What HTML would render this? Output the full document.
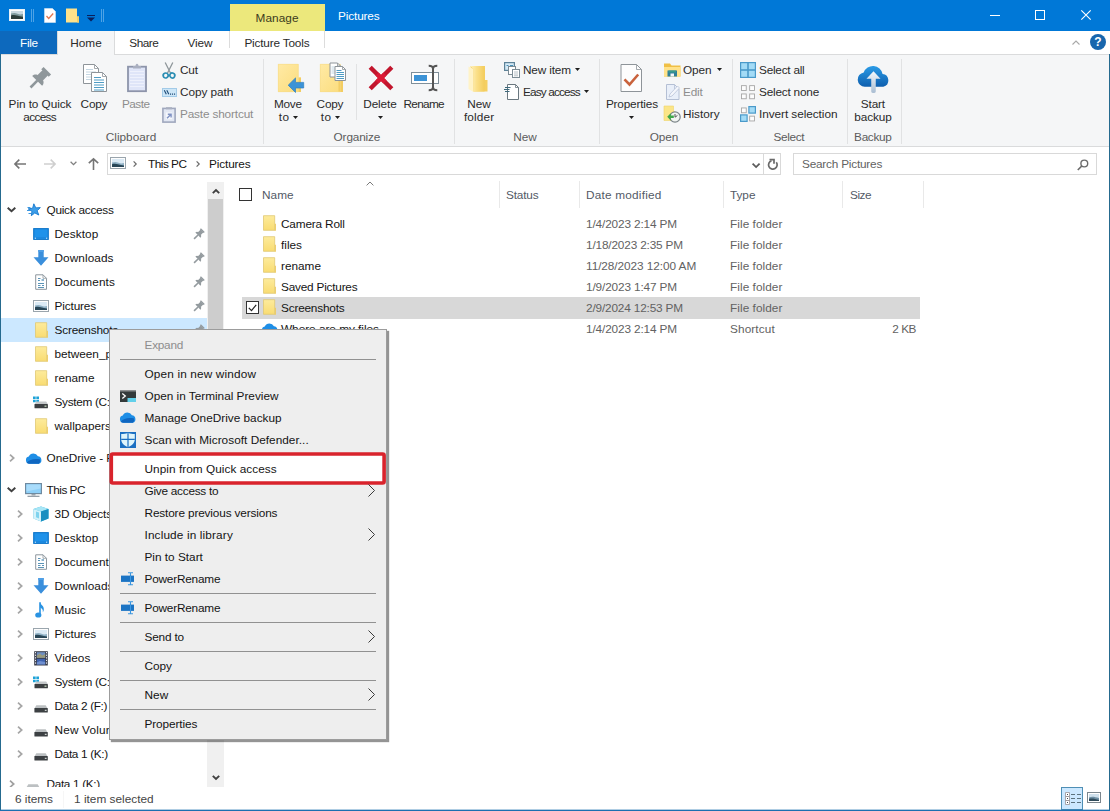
<!DOCTYPE html>
<html>
<head>
<meta charset="utf-8">
<title>Pictures</title>
<style>
*{box-sizing:border-box;margin:0;padding:0}
html,body{width:1110px;height:811px;overflow:hidden;background:#fff}
body{font-family:"Liberation Sans",sans-serif;font-size:11.8px;color:#141414;position:relative}
.a{position:absolute}
.t{position:absolute;white-space:nowrap;line-height:16px;height:16px}
.c{text-align:center}
.g{color:#8d8d8d}
.d{color:#5c5c5c}
.s{color:#444}
#tabs,#ribbon{color:#2a2a2a}
.h{color:#535a66}
.m{color:#626262}
svg{position:absolute;overflow:visible}
#win{position:absolute;left:0;top:0;width:1110px;height:811px;overflow:hidden}
</style>
</head>
<body>
<div id="win">
<svg width="0" height="0" style="left:0;top:0"><defs><linearGradient id="fg" x1="0" y1="0" x2="0" y2="1"><stop offset="0" stop-color="#fdeb9c"/><stop offset="1" stop-color="#f9dc72"/></linearGradient></defs></svg>
<div class="a" style="left:0px;top:0px;width:1110px;height:31px;background:#0078d7;"></div>
<div class="a" style="left:0px;top:31px;width:1110px;height:23px;background:#ffffff;"></div>
<div class="a" style="left:0px;top:54px;width:1110px;height:93px;background:#f5f6f7;border-top:1px solid #dadbdc;border-bottom:1px solid #dadbdc;"></div>
<div class="a" style="left:0px;top:147px;width:1110px;height:35px;background:#ffffff;"></div>
<div id="titlebar">
<svg style="left:9px;top:9px" width="16" height="12" viewBox="0 0 16 12"><rect x=".5" y=".5" width="15" height="11" fill="#fdfdfd" stroke="#e8f1f8"/><rect x="2" y="2" width="12" height="8" fill="#c9d8df"/><path d="M2 4.500c2.500-.8 4.500-.8 6.500.2s3.500.8 5.500.3V10H2z" fill="#7f9a9c"/><path d="M2 6.500c3-1 6-.2 9 .8l3 .5V10H2z" fill="#2c3d3a"/></svg>
<div class="a" style="left:31px;top:9px;width:1px;height:13px;background:#4ea3e6;"></div>
<div class="a" style="left:33px;top:9px;width:1px;height:13px;background:#4ea3e6;"></div>
<svg style="left:44px;top:8px" width="12" height="15" viewBox="0 0 12 15"><path d="M.5 .5h8l3 3v11h-11z" fill="#fff" stroke="#d8e6f2" stroke-width=".6"/><path d="M2.500 8l2.200 2.500 4.500-5" fill="none" stroke="#e27650" stroke-width="1.300"/></svg>
<svg style="left:66px;top:8px" width="13" height="15" viewBox="0 0 13 15"><path d="M0 .5h11v8h2v6H0z" fill="#ffe28a"/><path d="M11 8.500h2v6h-2z" fill="#f2cf6a"/></svg>
<svg style="left:87px;top:14.5px" width="8" height="7" viewBox="0 0 8 7"><path d="M0 .5h8" stroke="#0a1f5c" stroke-width="1"/><path d="M0 2.500h8L4 6.500z" fill="#0a1f5c"/></svg>
<div class="a" style="left:101px;top:9px;width:1px;height:13px;background:#4ea3e6;"></div>
<div class="a" style="left:103px;top:9px;width:1px;height:13px;background:#4ea3e6;"></div>
<div class="a" style="left:230px;top:4px;width:95px;height:27px;background:#ece87c;"></div>
<div class="t c" style="left:255.5px;top:10px;letter-spacing:0.08px;color:#3b3b20;">Manage</div>
<div class="t" style="left:338px;top:8px;letter-spacing:-0.13px;color:#fff;">Pictures</div>
<svg style="left:990px;top:15px" width="10" height="1" viewBox="0 0 10 1"><rect width="10" height="1" fill="#fff"/></svg>
<svg style="left:1035px;top:10px" width="10" height="10" viewBox="0 0 10 10"><rect x=".5" y=".5" width="9" height="9" fill="none" stroke="#fff"/></svg>
<svg style="left:1081px;top:10px" width="10" height="10" viewBox="0 0 10 10"><path d="M.3 .3l9.400 9.400M9.700 .3L.3 9.700" stroke="#fff" stroke-width="1.100"/></svg>
</div>
<div id="tabs">
<div class="a" style="left:0px;top:31px;width:57px;height:23px;background:#0d69bd;"></div>
<div class="t c" style="left:20.1px;top:35px;letter-spacing:-0.38px;color:#fff;">File</div>
<div class="a" style="left:57px;top:31px;width:58px;height:24px;background:#f5f6f7;border-left:1px solid #dadbdc;border-right:1px solid #dadbdc;"></div>
<div class="t c" style="left:70.3px;top:35px;letter-spacing:-0.02px;">Home</div>
<div class="t c" style="left:129.3px;top:35px;letter-spacing:-0.5px;">Share</div>
<div class="t c" style="left:187.6px;top:35px;letter-spacing:-0.18px;">View</div>
<div class="a" style="left:229px;top:31px;width:1px;height:17px;background:#dcdcdc;"></div>
<div class="a" style="left:324px;top:31px;width:1px;height:17px;background:#dcdcdc;"></div>
<div class="t c" style="left:244.4px;top:35px;letter-spacing:-0.18px;">Picture Tools</div>
<svg style="left:1072px;top:39.5px" width="8" height="5" viewBox="0 0 8 5"><path d="M.5 4.500L4 1l3.500 3.500" fill="none" stroke="#a8a8a8" stroke-width="1.100"/></svg>
<svg style="left:1090px;top:34px" width="16" height="16" viewBox="0 0 16 16"><circle cx="8" cy="8" r="8" fill="#1766ad"/><text x="8" y="12.300" font-family="Liberation Sans, sans-serif" font-size="12" font-weight="bold" fill="#fff" text-anchor="middle">?</text></svg>
</div>
<div id="ribbon">
<div class="a" style="left:263px;top:59px;width:1px;height:85px;background:#e1e2e3;"></div>
<div class="a" style="left:454px;top:59px;width:1px;height:85px;background:#e1e2e3;"></div>
<div class="a" style="left:599px;top:59px;width:1px;height:85px;background:#e1e2e3;"></div>
<div class="a" style="left:732px;top:59px;width:1px;height:85px;background:#e1e2e3;"></div>
<div class="a" style="left:847px;top:59px;width:1px;height:85px;background:#e1e2e3;"></div>
<div class="a" style="left:901px;top:59px;width:1px;height:85px;background:#e1e2e3;"></div>
<div class="a" style="left:356px;top:64px;width:1px;height:56px;background:#e1e2e3;"></div>
<div class="t c d" style="left:105.8px;top:129px;letter-spacing:-0.01px;">Clipboard</div>
<div class="t c d" style="left:333.6px;top:129px;letter-spacing:-0.16px;">Organize</div>
<div class="t c d" style="left:513.3px;top:129px;letter-spacing:-0.1px;">New</div>
<div class="t c d" style="left:649.7px;top:129px;letter-spacing:-0.11px;">Open</div>
<div class="t c d" style="left:773.5px;top:129px;letter-spacing:-0.36px;">Select</div>
<div class="t c d" style="left:854.1px;top:129px;letter-spacing:-0.33px;">Backup</div>
<svg style="left:29px;top:67px" width="22" height="22" viewBox="0 0 22 22"><g transform="translate(10 12) rotate(45)" fill="#8f979b"><path d="M-5.300 -11.800h10.600v3.300h-10.600z"/><path d="M-3.800 -9h7.600v7.500h-7.600z"/><path d="M-7 2.600c0-3 2.300-4.600 3.700-4.600h6.600c1.400 0 3.700 1.600 3.700 4.600z"/><path d="M-1.300 2.400h2.600v9.600h-2.600z"/></g></svg>
<div class="t c" style="left:8.6px;top:96px;letter-spacing:-0.07px;">Pin to Quick</div>
<div class="t c" style="left:23.3px;top:109px;letter-spacing:-0.65px;">access</div>
<svg style="left:83px;top:64px" width="24" height="28" viewBox="0 0 24 28"><path d="M0.5 0.5h11l4 4v15h-15z" fill="#fff" stroke="#8e9499" stroke-width="1"/><path d="M11.5 0.5v4h4" fill="none" stroke="#8e9499" stroke-width=".8"/><path d="M3 5.5H10" stroke="#c4d6e2" stroke-width="1"/><path d="M3 8H13" stroke="#c4d6e2" stroke-width="1"/><path d="M3 10.5H13" stroke="#c4d6e2" stroke-width="1"/><path d="M3 13H13" stroke="#c4d6e2" stroke-width="1"/><path d="M3 15.5H13" stroke="#c4d6e2" stroke-width="1"/><path d="M8.5 8.5h11l4 4v15h-15z" fill="#fff" stroke="#8e9499" stroke-width="1"/><path d="M19.5 8.5v4h4" fill="none" stroke="#8e9499" stroke-width=".8"/><path d="M11 13.5H18" stroke="#4f9cc4" stroke-width="1"/><path d="M11 16H21" stroke="#4f9cc4" stroke-width="1"/><path d="M11 18.5H21" stroke="#4f9cc4" stroke-width="1"/><path d="M11 21H21" stroke="#4f9cc4" stroke-width="1"/><path d="M11 23.5H21" stroke="#4f9cc4" stroke-width="1"/><path d="M11 26H21" stroke="#4f9cc4" stroke-width="1"/></svg>
<div class="t c" style="left:80.6px;top:96px;letter-spacing:-0.23px;">Copy</div>
<svg style="left:127px;top:63px" width="20" height="29" viewBox="0 0 20 29"><rect x="1" y="3.700" width="18" height="24.500" fill="#dfe5f8" stroke="#8d94aa" stroke-width="1.800"/><path d="M3 8.500h14M3 11.500h14M3 14.500h14M3 17.500h14M3 20.500h14M3 23.500h14" stroke="#eef1fc" stroke-width="1.200"/><path d="M6 5.500V3h2.500c0-1.300.5-2.300 1.500-2.300s1.500 1 1.500 2.300H14v2.500z" fill="#a9afc0"/></svg>
<div class="t c g" style="left:122.0px;top:96px;letter-spacing:-0.53px;">Paste</div>
<svg style="left:162px;top:62px" width="14" height="17" viewBox="0 0 14 17"><path d="M3.200 .5L8.700 11.500M10.800 .5L5.300 11.500" stroke="#8f979b" stroke-width="1.300"/><ellipse cx="3.700" cy="13.500" rx="2.500" ry="2.400" fill="none" stroke="#2a8db3" stroke-width="1.700" transform="rotate(-25 3.700 13.500)"/><ellipse cx="10.300" cy="13.500" rx="2.500" ry="2.400" fill="none" stroke="#2a8db3" stroke-width="1.700" transform="rotate(25 10.300 13.500)"/></svg>
<div class="t" style="left:180px;top:62px;letter-spacing:-0.18px;">Cut</div>
<svg style="left:161.5px;top:88px" width="15" height="9" viewBox="0 0 15 9"><rect x=".5" y=".5" width="14" height="8" fill="#cde6f7" stroke="#a3cbe8"/><path d="M2.300 2.300l2 4M4.800 2.300l2 4" stroke="#1d4b78" stroke-width="1.100"/><path d="M8 6.200h1.100M10 6.200h1.100M12 6.200h1.100" stroke="#1d4b78" stroke-width="1.300"/></svg>
<div class="t" style="left:180px;top:84px;letter-spacing:-0.06px;">Copy path</div>
<svg style="left:162px;top:105.5px" width="14" height="17" viewBox="0 0 14 17"><rect x=".9" y="2.400" width="12.200" height="13.700" fill="#e2e7f3" stroke="#a0a8be" stroke-width="1.600"/><path d="M4 3.300V1.200h6v2.100z" fill="#a9afc0"/><path d="M3.800 13.300V6.500h6.400v6.800z" fill="#f6f8fc"/><path d="M5 12.300l3.800-3.800M5.800 8.200h3.300v3.300" fill="none" stroke="#8193c4" stroke-width="1.400"/></svg>
<div class="t g" style="left:180px;top:106px;letter-spacing:-0.16px;">Paste shortcut</div>
<svg style="left:278px;top:64px" width="27" height="29" viewBox="0 0 27 29"><defs><linearGradient id="yg" x1="0" y1="0" x2="1" y2="1"><stop offset="0" stop-color="#ffeaa5"/><stop offset="1" stop-color="#fbdc7c"/></linearGradient></defs><path d="M0 0h20.500v13.500h2.500V28H0z" fill="url(#yg)"/><path d="M20.500 13.500H23V28h-2.500z" fill="#f3cd62"/><path d="M.3 .3h20v27.400H.3z" fill="none" stroke="#f7dc8a" stroke-width=".6"/><path d="M10.200 21.200l7.300-7.300v4.500h8.200v5.600h-8.200v4.500z" fill="#3c93d6" stroke="#2f7fc0" stroke-width=".7"/></svg>
<div class="t c" style="left:273.9px;top:96px;letter-spacing:-0.21px;">Move</div>
<div class="t c" style="left:278.8px;top:109px;letter-spacing:0.49px;">to</div>
<svg style="left:293.2px;top:115.5px" width="5" height="3" viewBox="0 0 5 3"><path d="M0 0h5L2.500 3z" fill="#1f1f1f"/></svg>
<svg style="left:320px;top:62px" width="27" height="30" viewBox="0 0 27 30"><path d="M0 2h20.500v13.500h2.500V30H0z" fill="url(#yg)"/><path d="M18.500 15.500H23V30h-4.500z" fill="#f3cd62"/><path d="M.3 2.300h20v27.400H.3z" fill="none" stroke="#f7dc8a" stroke-width=".6"/><path d="M10.0 1.0h7.5l3 3v11h-10.5z" fill="#fff" stroke="#8e9499" stroke-width="1"/><path d="M17.5 1.0v3h3" fill="none" stroke="#8e9499" stroke-width=".8"/><path d="M11.5 5.0H16.5" stroke="#c4d6e2" stroke-width="1"/><path d="M11.5 7.0H18.5" stroke="#c4d6e2" stroke-width="1"/><path d="M11.5 9.0H18.5" stroke="#c4d6e2" stroke-width="1"/><path d="M11.5 11.0H18.5" stroke="#c4d6e2" stroke-width="1"/><path d="M15.0 4.5h7.5l3 3v11h-10.5z" fill="#fff" stroke="#8e9499" stroke-width="1"/><path d="M22.5 4.5v3h3" fill="none" stroke="#8e9499" stroke-width=".8"/><path d="M16.5 8.5H21.5" stroke="#4f9cc4" stroke-width="1"/><path d="M16.5 10.5H24.0" stroke="#4f9cc4" stroke-width="1"/><path d="M16.5 12.5H24.0" stroke="#4f9cc4" stroke-width="1"/><path d="M16.5 14.5H24.0" stroke="#4f9cc4" stroke-width="1"/><path d="M16.5 16.5H24.0" stroke="#4f9cc4" stroke-width="1"/></svg>
<div class="t c" style="left:316.6px;top:96px;letter-spacing:-0.23px;">Copy</div>
<div class="t c" style="left:320.8px;top:109px;letter-spacing:0.49px;">to</div>
<svg style="left:335.2px;top:115.5px" width="5" height="3" viewBox="0 0 5 3"><path d="M0 0h5L2.500 3z" fill="#1f1f1f"/></svg>
<svg style="left:368px;top:65px" width="26" height="26" viewBox="0 0 26 26"><path d="M2.200 2.200l21.600 21.600M23.800 2.200L2.200 23.800" stroke="#c2152d" stroke-width="4.400"/><path d="M9 9l8 8M17 9l-8 8" stroke="#dc1a36" stroke-width="4.400"/></svg>
<div class="t c" style="left:363.3px;top:96px;letter-spacing:-0.13px;">Delete</div>
<svg style="left:378.0px;top:115.5px" width="5" height="3" viewBox="0 0 5 3"><path d="M0 0h5L2.500 3z" fill="#1f1f1f"/></svg>
<svg style="left:410px;top:64px" width="30" height="28" viewBox="0 0 30 28"><rect x="1.500" y="8.500" width="27" height="11" fill="#fff" stroke="#7f8f9a" stroke-width="1"/><rect x="4" y="11" width="13" height="6" fill="#3c93d6"/><path d="M18.700 1.800c2.500 0 4.300 1 4.300 3.200v18c0 2.200-1.800 3.200-4.300 3.200M27.300 1.800c-2.500 0-4.300 1-4.300 3.200v18c0 2.200 1.800 3.200 4.300 3.200" fill="none" stroke="#555" stroke-width="2"/></svg>
<div class="t c" style="left:403.4px;top:96px;letter-spacing:-0.67px;">Rename</div>
<svg style="left:467px;top:65px" width="22" height="28" viewBox="0 0 22 28"><defs><linearGradient id="nf" x1="0" y1="0" x2="1" y2="0"><stop offset="0" stop-color="#fff3c4"/><stop offset=".45" stop-color="#fbe08a"/><stop offset="1" stop-color="#f3cc5c"/></linearGradient></defs><path d="M3.500 1h14.500v14h2.500v11.500H6z" fill="#f5cf62"/><path d="M1.500 1.500l5 2.500v23l-5-3z" fill="#fff3c8"/><path d="M3 1h12.500l2 2.500V26.500H6.500V4z" fill="url(#nf)"/></svg>
<div class="t c" style="left:467.3px;top:96px;letter-spacing:-0.1px;">New</div>
<div class="t c" style="left:463.9px;top:109px;letter-spacing:0.15px;">folder</div>
<svg style="left:504px;top:62px" width="16" height="16" viewBox="0 0 16 16"><rect x=".6" y=".6" width="9.800" height="7.800" fill="#d7ebf7" stroke="#5d8298" stroke-width="1.200"/><path d="M2.500 3.500h2M6 3.500h3" stroke="#4a90b8" stroke-width="1"/><rect x="4.500" y="4.500" width="7" height="8" fill="#fff" stroke="#7c8b94" stroke-width="1"/><rect x="8.500" y="7.500" width="7" height="8" fill="#fff" stroke="#7c8b94" stroke-width="1"/><path d="M10 10h4M10 12h4M10 13.800h4" stroke="#a5b0b8" stroke-width=".8"/></svg>
<div class="t" style="left:523px;top:62px;letter-spacing:-0.17px;">New item</div>
<svg style="left:575.0px;top:68.2px" width="5" height="3" viewBox="0 0 5 3"><path d="M0 0h5L2.500 3z" fill="#1f1f1f"/></svg>
<svg style="left:504px;top:84px" width="15" height="16" viewBox="0 0 15 16"><path d="M3.500 .5h8l3 3v12h-11z" fill="#fff" stroke="#6a777f" stroke-width="1"/><path d="M11.500 .5v3h3" fill="none" stroke="#6a777f" stroke-width=".8"/><path d="M1 3.500h5.500M0 5.500h5.500M1 7.500h4.500" stroke="#3f6a7c" stroke-width="1"/></svg>
<div class="t" style="left:523px;top:84px;letter-spacing:-0.86px;">Easy access</div>
<svg style="left:584.0px;top:90.2px" width="5" height="3" viewBox="0 0 5 3"><path d="M0 0h5L2.500 3z" fill="#1f1f1f"/></svg>
<svg style="left:620px;top:64px" width="22" height="28" viewBox="0 0 22 28"><path d="M1 .5h15.500l5 5v22H1z" fill="#fdfdfd" stroke="#8e9499" stroke-width="1"/><path d="M16.500 .5v5h5" fill="none" stroke="#8e9499" stroke-width=".8"/><path d="M4.500 15.300l5 5.200L18.200 10.500" fill="none" stroke="#c9623c" stroke-width="2.600"/></svg>
<div class="t c" style="left:605.9px;top:96px;letter-spacing:-0.18px;">Properties</div>
<svg style="left:629.0px;top:115.5px" width="5" height="3" viewBox="0 0 5 3"><path d="M0 0h5L2.500 3z" fill="#1f1f1f"/></svg>
<svg style="left:664px;top:62px" width="17" height="16" viewBox="0 0 17 16"><path d="M0 1.500h6l1.500 2H16.500v11H0z" fill="#f0bf45"/><path d="M0 5h16.500v9.500H0z" fill="#ffe28a"/><path d="M3.500 8.500h9.500v6H3.500z" fill="#2f7f9a"/><path d="M4.500 8.500h7.500v2H4.500z" fill="#3a9b8c"/><path d="M6.500 11.500h3.500v3H6.500z" fill="#f5f6f7"/></svg>
<div class="t" style="left:683px;top:62px;letter-spacing:-0.11px;">Open</div>
<svg style="left:717.0px;top:68.2px" width="5" height="3" viewBox="0 0 5 3"><path d="M0 0h5L2.500 3z" fill="#1f1f1f"/></svg>
<svg style="left:666px;top:84px" width="14" height="16" viewBox="0 0 14 16"><path d="M.5 .5h8l4.500 4.500v10.500H.5z" fill="#e9eff9" stroke="#b4bfd4" stroke-width="1"/><path d="M8.500 .5v4.500H13" fill="none" stroke="#b4bfd4" stroke-width=".8"/><path d="M3 13l1-3 7.500-8 2 2-7.500 8z" fill="#f4f6fb" stroke="#b9c3d8" stroke-width=".8"/></svg>
<div class="t g" style="left:683px;top:84px;letter-spacing:-0.18px;">Edit</div>
<svg style="left:664px;top:106px" width="17" height="17" viewBox="0 0 17 17"><path d="M0 0h9.500v5h1.500v9.500H0z" fill="#fbe588"/><path d="M0 0h9.500v14.500H0z" fill="none" stroke="#efd56a" stroke-width=".6"/><circle cx="11" cy="11" r="5.200" fill="#f1f4f2" stroke="#7a8488" stroke-width="1.200"/><path d="M11 8v3.200l2.400-1.700" fill="none" stroke="#555" stroke-width="1"/><path d="M3.200 10.800l3.600-3.600v2.300h3v2.600h-3v2.300z" fill="#3fa84a"/></svg>
<div class="t" style="left:683px;top:106px;letter-spacing:-0.01px;">History</div>
<svg style="left:740px;top:62px" width="16" height="16" viewBox="0 0 16 16"><rect width="16" height="16" fill="#4a9aca"/><rect x="1.2" y="1.2" width="6" height="6" fill="#a3dbf6"/><rect x="1.2" y="8.8" width="6" height="6" fill="#a3dbf6"/><rect x="8.8" y="1.2" width="6" height="6" fill="#a3dbf6"/><rect x="8.8" y="8.8" width="6" height="6" fill="#a3dbf6"/></svg>
<div class="t" style="left:759px;top:62px;letter-spacing:-0.24px;">Select all</div>
<svg style="left:740px;top:84px" width="16" height="16" viewBox="0 0 16 16"><rect x="1.45" y="1.65" width="4.8" height="4.8" fill="#fdfdfd" stroke="#a6a6a6" stroke-width="0.9"/><rect x="1.45" y="9.95" width="4.8" height="4.8" fill="#fdfdfd" stroke="#a6a6a6" stroke-width="0.9"/><rect x="9.649999999999999" y="1.65" width="4.8" height="4.8" fill="#fdfdfd" stroke="#a6a6a6" stroke-width="0.9"/><rect x="9.649999999999999" y="9.95" width="4.8" height="4.8" fill="#fdfdfd" stroke="#a6a6a6" stroke-width="0.9"/></svg>
<div class="t" style="left:759px;top:84px;letter-spacing:-0.21px;">Select none</div>
<svg style="left:740px;top:106px" width="16" height="16" viewBox="0 0 16 16"><rect x="1.45" y="1.95" width="4.8" height="4.8" fill="#fdfdfd" stroke="#a6a6a6" stroke-width="0.9"/><rect x="8.9" y="0.6" width="6.5" height="6.5" fill="#a3dbf6" stroke="#4a9aca" stroke-width="1.2"/><rect x="0.6" y="8.9" width="6.5" height="6.5" fill="#a3dbf6" stroke="#4a9aca" stroke-width="1.2"/><rect x="9.649999999999999" y="10.149999999999999" width="4.8" height="4.8" fill="#fdfdfd" stroke="#a6a6a6" stroke-width="0.9"/></svg>
<div class="t" style="left:759px;top:106px;letter-spacing:-0.06px;">Invert selection</div>
<svg style="left:856.5px;top:63.5px" width="33" height="29" viewBox="0 0 32 28"><defs><linearGradient id="cg" x1="0" y1="0" x2="0" y2="1"><stop offset="0" stop-color="#2a9be6"/><stop offset="1" stop-color="#0f5fae"/></linearGradient><linearGradient id="ag" x1="0" y1="0" x2="0" y2="1"><stop offset="0" stop-color="#f4f8fc"/><stop offset="1" stop-color="#a9bdd2"/></linearGradient></defs><path d="M7.500 22a7 7 0 0 1-1-13.900A9.500 9.500 0 0 1 24.800 9.600a6.300 6.300 0 0 1 .7 12.400z" fill="url(#cg)"/><path d="M16 7l6.800 7.200h-4.600V26.500a2.200 1.500 0 0 1-4.400 0V14.200H9.200z" fill="url(#ag)"/></svg>
<div class="t c" style="left:860.8px;top:96px;letter-spacing:-0.15px;">Start</div>
<div class="t c" style="left:854.2px;top:109px;letter-spacing:-0.08px;">backup</div>
</div>
<div id="addressbar">
<svg style="left:14px;top:159px" width="12" height="10" viewBox="0 0 12 10"><path d="M5.300 .6L.9 5l4.400 4.400M.9 5H12" fill="none" stroke="#757575" stroke-width="1.600"/></svg>
<svg style="left:44px;top:159px" width="12" height="10" viewBox="0 0 12 10"><path d="M6.700 .6L11.100 5l-4.400 4.400M11.100 5H0" fill="none" stroke="#cfcfcf" stroke-width="1.600"/></svg>
<svg style="left:70px;top:161px" width="7" height="5" viewBox="0 0 7 5"><path d="M.6 .8l2.900 2.900L6.400 .8" fill="none" stroke="#808080" stroke-width="1.300"/></svg>
<svg style="left:88px;top:158px" width="11" height="12" viewBox="0 0 11 12"><path d="M.8 5.200L5.500 .9l4.700 4.300M5.500 .9V12" fill="none" stroke="#757575" stroke-width="1.600"/></svg>
<div class="a" style="left:107px;top:153px;width:674px;height:22px;background:#fff;border:1px solid #d9d9d9;"></div>
<svg style="left:110px;top:157px" width="16" height="12" viewBox="0 0 16 12"><rect x=".5" y=".5" width="15" height="11" fill="#fdfdfd" stroke="#9aa5ad"/><rect x="2" y="2" width="12" height="8" fill="#dbeaf5"/><path d="M2 5.500c2.500-.8 4.500-.8 6.500.2s3.500.8 5.500.3V10H2z" fill="#8fb0c4"/><path d="M2 7.200c3-1 6-.2 9 .8l3 .5V10H2z" fill="#274556"/></svg>
<svg style="left:133px;top:161.3px" width="4" height="6" viewBox="0 0 4 6"><path d="M.6 .4l2.600 2.600L.6 5.600" fill="none" stroke="#6a6a6a" stroke-width="1.200"/></svg>
<div class="t" style="left:148px;top:156px;letter-spacing:-0.49px;">This PC</div>
<svg style="left:195.5px;top:161.3px" width="4" height="6" viewBox="0 0 4 6"><path d="M.6 .4l2.600 2.600L.6 5.600" fill="none" stroke="#6a6a6a" stroke-width="1.200"/></svg>
<div class="t" style="left:209px;top:156px;letter-spacing:-0.13px;">Pictures</div>
<svg style="left:752px;top:162.5px" width="8" height="5" viewBox="0 0 8 5"><path d="M.6 .6L4.100 4.100 7.600 .6" fill="none" stroke="#5c5c5c" stroke-width="1.800"/></svg>
<div class="a" style="left:763px;top:153px;width:1px;height:22px;background:#d9d9d9;"></div>
<svg style="left:768px;top:159px" width="10" height="11" viewBox="0 0 10 11"><path d="M8.300 3.200A4.300 4.300 0 1 1 3.500 1.700" fill="none" stroke="#6a6a6a" stroke-width="1.700"/><path d="M1.500 .7h4.500v4" fill="none" stroke="#6a6a6a" stroke-width="1.700"/></svg>
<div class="a" style="left:793px;top:153px;width:304px;height:22px;background:#fff;border:1px solid #d9d9d9;"></div>
<div class="t m" style="left:802px;top:156px;letter-spacing:-0.21px;">Search Pictures</div>
<svg style="left:1076.5px;top:158.7px" width="12" height="12" viewBox="0 0 12 12"><circle cx="7.300" cy="4.500" r="3.400" fill="none" stroke="#6b6b6b" stroke-width="1.400"/><path d="M4.800 7L.8 11" stroke="#6b6b6b" stroke-width="1.700"/></svg>
</div>
<div id="navpane">
<div class="a" style="left:1px;top:318px;width:206px;height:24px;background:#cce8ff;"></div>
<svg style="left:7.0px;top:206.8px" width="9" height="5" viewBox="0 0 9 5"><path d="M.7 .7l3.800 3.600L8.300 .7" fill="none" stroke="#404040" stroke-width="1.900"/></svg>
<svg style="left:25px;top:202px" width="17" height="16" viewBox="0 0 17 16"><path d="M8.8 1.8L10.8 5.9L15.3 5.6L12.1 8.8L13.8 13.0L9.8 10.9L6.3 13.7L7.0 9.3L3.2 6.9L7.7 6.2z" fill="#3d9ee9" stroke="#1e7fd2" stroke-width="1"/><path d="M2.500 5.500h3M2 8.500h3.500M3.500 11.500h2.500" stroke="#3a96e0" stroke-width="1"/></svg>
<div class="t" style="left:46.5px;top:202px;letter-spacing:-0.25px;">Quick access</div>
<svg style="left:33px;top:226px" width="16" height="16" viewBox="0 0 16 16"><rect x=".3" y="2.200" width="15.400" height="11.600" fill="#1f92ea"/><rect x=".8" y="2.700" width="14.400" height="10.600" fill="none" stroke="#1273c4" stroke-width="1"/><path d="M1.500 11.200h13v1.300h-13z" fill="#1c86dc"/><rect x="1.800" y="11.700" width="1.200" height="1" fill="#d8eefc"/><rect x="13" y="11.700" width="1.200" height="1" fill="#d8eefc"/></svg>
<div class="t" style="left:54.5px;top:226px;letter-spacing:0.09px;">Desktop</div>
<svg style="left:193px;top:229px" width="11" height="11" viewBox="0 0 11 11"><g transform="translate(5.400 5.600) rotate(45)" fill="#949b9f"><path d="M-2.700 -6.300h5.400v1.400h-5.400z"/><path d="M-2 -5.200h4v4.200h-4z"/><path d="M-3.600 .7c0-1.500 1.100-2.300 1.900-2.300h3.400c.8 0 1.900.8 1.900 2.300z"/><path d="M-.8 .5h1.600v5.600h-1.600z"/></g></svg>
<svg style="left:33px;top:250px" width="16" height="16" viewBox="0 0 16 16"><path d="M5.300 0h5.400v7.300h4.800L8 15.700.5 7.300h4.800z" fill="#3a8fdc"/><path d="M5.300 0h5.400v2H5.300z" fill="#4f9fe6"/></svg>
<div class="t" style="left:54.5px;top:250px;letter-spacing:0.08px;">Downloads</div>
<svg style="left:193px;top:253px" width="11" height="11" viewBox="0 0 11 11"><g transform="translate(5.400 5.600) rotate(45)" fill="#949b9f"><path d="M-2.700 -6.300h5.400v1.400h-5.400z"/><path d="M-2 -5.200h4v4.200h-4z"/><path d="M-3.600 .7c0-1.500 1.100-2.300 1.900-2.300h3.400c.8 0 1.900.8 1.900 2.300z"/><path d="M-.8 .5h1.600v5.600h-1.600z"/></g></svg>
<svg style="left:33px;top:274px" width="16" height="16" viewBox="0 0 16 16"><path d="M2.700 .8h7.300l3.500 3.500v11H2.700z" fill="#fff" stroke="#8e979e" stroke-width="1"/><path d="M10 .8v3.500h3.500" fill="none" stroke="#8e979e" stroke-width=".8"/><path d="M5 4.500h2.500M5 6.500h2M5 9.500h6M5 11.500h2.500M9 11.500h2M5 13.500h6" stroke="#5b93b6" stroke-width="1"/><path d="M8.500 5h2.500v2H8.500z" fill="#8db6d0"/></svg>
<div class="t" style="left:54.5px;top:274px;letter-spacing:0.08px;">Documents</div>
<svg style="left:193px;top:277px" width="11" height="11" viewBox="0 0 11 11"><g transform="translate(5.400 5.600) rotate(45)" fill="#949b9f"><path d="M-2.700 -6.300h5.400v1.400h-5.400z"/><path d="M-2 -5.200h4v4.200h-4z"/><path d="M-3.600 .7c0-1.500 1.100-2.300 1.900-2.300h3.400c.8 0 1.900.8 1.900 2.300z"/><path d="M-.8 .5h1.600v5.600h-1.600z"/></g></svg>
<svg style="left:33px;top:300px" width="16" height="12" viewBox="0 0 16 12"><rect x=".5" y=".5" width="15" height="11" fill="#fdfdfd" stroke="#9aa5ad"/><rect x="2" y="2" width="12" height="8" fill="#dbeaf5"/><path d="M2 5.500c2.500-.8 4.500-.8 6.500.2s3.500.8 5.500.3V10H2z" fill="#8fb0c4"/><path d="M2 7.200c3-1 6-.2 9 .8l3 .5V10H2z" fill="#274556"/></svg>
<div class="t" style="left:54.5px;top:298px;letter-spacing:-0.13px;">Pictures</div>
<svg style="left:193px;top:301px" width="11" height="11" viewBox="0 0 11 11"><g transform="translate(5.400 5.600) rotate(45)" fill="#949b9f"><path d="M-2.700 -6.300h5.400v1.400h-5.400z"/><path d="M-2 -5.200h4v4.200h-4z"/><path d="M-3.600 .7c0-1.500 1.100-2.300 1.900-2.300h3.400c.8 0 1.900.8 1.900 2.300z"/><path d="M-.8 .5h1.600v5.600h-1.600z"/></g></svg>
<svg style="left:33px;top:322px" width="16" height="16" viewBox="0 0 16 16"><path d="M13.500 8.800h1.400v6.900h-1.400z" fill="#f0cb5e"/><path d="M2.500 .7h11.200v14.600H2.500z" fill="url(#fg)" stroke="#e0c873" stroke-width=".8"/></svg>
<div class="t" style="left:54.5px;top:322px;letter-spacing:-0.19px;">Screenshots</div>
<svg style="left:193px;top:325px" width="11" height="11" viewBox="0 0 11 11"><g transform="translate(5.400 5.600) rotate(45)" fill="#949b9f"><path d="M-2.700 -6.300h5.400v1.400h-5.400z"/><path d="M-2 -5.200h4v4.200h-4z"/><path d="M-3.600 .7c0-1.500 1.100-2.300 1.900-2.300h3.400c.8 0 1.900.8 1.900 2.300z"/><path d="M-.8 .5h1.600v5.600h-1.600z"/></g></svg>
<svg style="left:33px;top:346px" width="16" height="16" viewBox="0 0 16 16"><path d="M13.500 8.800h1.400v6.900h-1.400z" fill="#f0cb5e"/><path d="M2.500 .7h11.200v14.600H2.500z" fill="url(#fg)" stroke="#e0c873" stroke-width=".8"/></svg>
<div class="t" style="left:54.5px;top:346px;letter-spacing:-0.03px;">between_p</div>
<svg style="left:33px;top:370px" width="16" height="16" viewBox="0 0 16 16"><path d="M13.500 8.800h1.400v6.900h-1.400z" fill="#f0cb5e"/><path d="M2.500 .7h11.200v14.600H2.500z" fill="url(#fg)" stroke="#e0c873" stroke-width=".8"/></svg>
<div class="t" style="left:54.5px;top:370px;letter-spacing:-0.01px;">rename</div>
<svg style="left:33px;top:394px" width="16" height="16" viewBox="0 0 16 16"><path d="M0 2.500h2.700v2.600H0zM3.300 2.500h2.700v2.600H3.300zM0 5.700h2.700v2.600H0zM3.300 5.700h2.700v2.600H3.300z" fill="#1fa3d8"/><path d="M1.800 10l1.600-2.500h9.800L14.800 10z" fill="#c4c7c9"/><rect x="1.500" y="10" width="13.400" height="4.300" rx=".6" fill="#3c3f41"/><rect x="11.500" y="11.600" width="2" height="1.100" fill="#d9f0d0"/></svg>
<div class="t" style="left:54.5px;top:394px;letter-spacing:-0.31px;">System (C:)</div>
<svg style="left:33px;top:418px" width="16" height="16" viewBox="0 0 16 16"><path d="M13.500 8.800h1.400v6.900h-1.400z" fill="#f0cb5e"/><path d="M2.500 .7h11.200v14.600H2.500z" fill="url(#fg)" stroke="#e0c873" stroke-width=".8"/></svg>
<div class="t" style="left:54.5px;top:418px;letter-spacing:-0.01px;">wallpapers</div>
<svg style="left:8.5px;top:454px" width="6" height="8" viewBox="0 0 6 8"><path d="M1 .7l3.700 3.300L1 7.300" fill="none" stroke="#a6a6a6" stroke-width="1.700"/></svg>
<svg style="left:25px;top:453px" width="17" height="11" viewBox="0.5 0 15.5 10.800"><path d="M4.300 10.500a3.600 3.600 0 0 1-.7-7.100A5 5 0 0 1 12.600 3.300 3.700 3.700 0 0 1 13.500 10.500z" fill="#1e8ee6"/><path d="M1.600 9.300C4.500 6.300 8.500 5.200 14.500 6.200a3.700 3.700 0 0 1-1 4.300H4.300a3.600 3.600 0 0 1-2.700-1.200z" fill="#0f66c0"/></svg>
<div class="t" style="left:46.5px;top:450px;letter-spacing:-0.04px;">OneDrive - Personal</div>
<svg style="left:7.0px;top:486.8px" width="9" height="5" viewBox="0 0 9 5"><path d="M.7 .7l3.800 3.600L8.300 .7" fill="none" stroke="#404040" stroke-width="1.900"/></svg>
<svg style="left:25px;top:481px" width="17" height="16" viewBox="0 0 17 16"><rect x=".6" y="2.600" width="15.800" height="10" fill="#8ed0f8" stroke="#6f8aa0" stroke-width="1.200"/><path d="M1.500 3.500h14v4l-14 3z" fill="#a9dcfb"/><path d="M6.500 13h4v1.500h-4z" fill="#9aa5ad"/><path d="M2.500 15.300h12" stroke="#8a959d" stroke-width="1.200"/></svg>
<div class="t" style="left:46.5px;top:482px;letter-spacing:-0.49px;">This PC</div>
<svg style="left:16.8px;top:510px" width="6" height="8" viewBox="0 0 6 8"><path d="M1 .7l3.700 3.300L1 7.300" fill="none" stroke="#a6a6a6" stroke-width="1.700"/></svg>
<svg style="left:33px;top:506px" width="16" height="16" viewBox="0 0 16 16"><path d="M8 .5l7.500 2.500v9.500L8 15.500.5 12.500V3z" fill="#35b6e0"/><path d="M8 .5l7.500 2.500L8 5.500.5 3z" fill="#a8e6f6"/><path d="M.5 3L8 5.500v10L.5 12.500z" fill="#d5f2fa"/><path d="M8 5.500l7.500-2.500v9.500L8 15.500z" fill="#1a8fc0"/><path d="M3 5.500l3 1v6l-3-1.200z" fill="#7fd3ee"/></svg>
<div class="t" style="left:54.5px;top:506px;letter-spacing:-0.07px;">3D Objects</div>
<svg style="left:16.8px;top:534px" width="6" height="8" viewBox="0 0 6 8"><path d="M1 .7l3.700 3.300L1 7.300" fill="none" stroke="#a6a6a6" stroke-width="1.700"/></svg>
<svg style="left:33px;top:530px" width="16" height="16" viewBox="0 0 16 16"><rect x=".3" y="2.200" width="15.400" height="11.600" fill="#1f92ea"/><rect x=".8" y="2.700" width="14.400" height="10.600" fill="none" stroke="#1273c4" stroke-width="1"/><path d="M1.500 11.200h13v1.300h-13z" fill="#1c86dc"/><rect x="1.800" y="11.700" width="1.200" height="1" fill="#d8eefc"/><rect x="13" y="11.700" width="1.200" height="1" fill="#d8eefc"/></svg>
<div class="t" style="left:54.5px;top:530px;letter-spacing:0.09px;">Desktop</div>
<svg style="left:16.8px;top:558px" width="6" height="8" viewBox="0 0 6 8"><path d="M1 .7l3.700 3.300L1 7.300" fill="none" stroke="#a6a6a6" stroke-width="1.700"/></svg>
<svg style="left:33px;top:554px" width="16" height="16" viewBox="0 0 16 16"><path d="M2.700 .8h7.300l3.500 3.500v11H2.700z" fill="#fff" stroke="#8e979e" stroke-width="1"/><path d="M10 .8v3.500h3.500" fill="none" stroke="#8e979e" stroke-width=".8"/><path d="M5 4.500h2.500M5 6.500h2M5 9.500h6M5 11.500h2.500M9 11.500h2M5 13.500h6" stroke="#5b93b6" stroke-width="1"/><path d="M8.500 5h2.500v2H8.500z" fill="#8db6d0"/></svg>
<div class="t" style="left:54.5px;top:554px;letter-spacing:0.08px;">Documents</div>
<svg style="left:16.8px;top:582px" width="6" height="8" viewBox="0 0 6 8"><path d="M1 .7l3.700 3.300L1 7.300" fill="none" stroke="#a6a6a6" stroke-width="1.700"/></svg>
<svg style="left:33px;top:578px" width="16" height="16" viewBox="0 0 16 16"><path d="M5.300 0h5.400v7.300h4.800L8 15.700.5 7.300h4.800z" fill="#3a8fdc"/><path d="M5.300 0h5.400v2H5.300z" fill="#4f9fe6"/></svg>
<div class="t" style="left:54.5px;top:578px;letter-spacing:0.08px;">Downloads</div>
<svg style="left:16.8px;top:606px" width="6" height="8" viewBox="0 0 6 8"><path d="M1 .7l3.700 3.300L1 7.300" fill="none" stroke="#a6a6a6" stroke-width="1.700"/></svg>
<svg style="left:33px;top:602px" width="16" height="16" viewBox="0 0 16 16"><path d="M7 .3c.5 2.500 4.300 3.300 3.800 7.700-.1 1-.6 1.800-1 2.300.5-2.500-.8-4-2.800-4.800z" fill="#2a93e2"/><path d="M6.200 .3h1.600v12.200H6.200z" fill="#2a93e2"/><ellipse cx="5.300" cy="13" rx="3.100" ry="2.600" fill="#2a93e2"/></svg>
<div class="t" style="left:54.5px;top:602px;letter-spacing:0.06px;">Music</div>
<svg style="left:16.8px;top:630px" width="6" height="8" viewBox="0 0 6 8"><path d="M1 .7l3.700 3.300L1 7.300" fill="none" stroke="#a6a6a6" stroke-width="1.700"/></svg>
<svg style="left:33px;top:628px" width="16" height="12" viewBox="0 0 16 12"><rect x=".5" y=".5" width="15" height="11" fill="#fdfdfd" stroke="#9aa5ad"/><rect x="2" y="2" width="12" height="8" fill="#dbeaf5"/><path d="M2 5.500c2.500-.8 4.500-.8 6.500.2s3.500.8 5.500.3V10H2z" fill="#8fb0c4"/><path d="M2 7.200c3-1 6-.2 9 .8l3 .5V10H2z" fill="#274556"/></svg>
<div class="t" style="left:54.5px;top:626px;letter-spacing:-0.13px;">Pictures</div>
<svg style="left:16.8px;top:654px" width="6" height="8" viewBox="0 0 6 8"><path d="M1 .7l3.700 3.300L1 7.300" fill="none" stroke="#a6a6a6" stroke-width="1.700"/></svg>
<svg style="left:33px;top:650px" width="16" height="16" viewBox="0 0 16 16"><rect x="1.200" y="1.200" width="13.600" height="14.300" fill="#3a3d4a"/><rect x="3.800" y="2.200" width="8.400" height="5.600" fill="#6f8fc0"/><path d="M3.800 5.500l3-2 2.500 2 2.900-1.500v3.800H3.800z" fill="#9a9a7a"/><rect x="3.800" y="8.800" width="8.400" height="5.600" fill="#3f63b0"/><path d="M3.800 12.500l3-1.500 5.400 1v2.400H3.800z" fill="#6f8fd0"/><path d="M2.500 2v13M13.500 2v13" stroke="#e8e8ee" stroke-width="1" stroke-dasharray="1.300 1.300"/></svg>
<div class="t" style="left:54.5px;top:650px;letter-spacing:-0.01px;">Videos</div>
<svg style="left:16.8px;top:678px" width="6" height="8" viewBox="0 0 6 8"><path d="M1 .7l3.700 3.300L1 7.300" fill="none" stroke="#a6a6a6" stroke-width="1.700"/></svg>
<svg style="left:33px;top:674px" width="16" height="16" viewBox="0 0 16 16"><path d="M0 2.500h2.700v2.600H0zM3.300 2.500h2.700v2.600H3.300zM0 5.700h2.700v2.600H0zM3.300 5.700h2.700v2.600H3.300z" fill="#1fa3d8"/><path d="M1.800 10l1.600-2.500h9.800L14.800 10z" fill="#c4c7c9"/><rect x="1.500" y="10" width="13.400" height="4.300" rx=".6" fill="#3c3f41"/><rect x="11.500" y="11.600" width="2" height="1.100" fill="#d9f0d0"/></svg>
<div class="t" style="left:54.5px;top:674px;letter-spacing:-0.31px;">System (C:)</div>
<svg style="left:16.8px;top:702px" width="6" height="8" viewBox="0 0 6 8"><path d="M1 .7l3.700 3.300L1 7.300" fill="none" stroke="#a6a6a6" stroke-width="1.700"/></svg>
<svg style="left:33px;top:698px" width="16" height="16" viewBox="0 0 16 16"><path d="M1.600 10.200l1.700-2.900h9.400l1.700 2.900z" fill="#bcc0c2"/><rect x="1.400" y="10" width="13.400" height="4.500" rx=".6" fill="#3c4043"/><rect x="11.800" y="11.800" width="1.800" height="1" fill="#f0f4f0"/></svg>
<div class="t" style="left:54.5px;top:698px;letter-spacing:-0.34px;">Data 2 (F:)</div>
<svg style="left:16.8px;top:726px" width="6" height="8" viewBox="0 0 6 8"><path d="M1 .7l3.700 3.300L1 7.300" fill="none" stroke="#a6a6a6" stroke-width="1.700"/></svg>
<svg style="left:33px;top:722px" width="16" height="16" viewBox="0 0 16 16"><path d="M1.600 10.200l1.700-2.900h9.400l1.700 2.900z" fill="#bcc0c2"/><rect x="1.400" y="10" width="13.400" height="4.500" rx=".6" fill="#3c4043"/><rect x="11.800" y="11.800" width="1.800" height="1" fill="#f0f4f0"/></svg>
<div class="t" style="left:54.5px;top:722px;letter-spacing:0.18px;">New Volume</div>
<svg style="left:16.8px;top:750px" width="6" height="8" viewBox="0 0 6 8"><path d="M1 .7l3.700 3.300L1 7.300" fill="none" stroke="#a6a6a6" stroke-width="1.700"/></svg>
<svg style="left:33px;top:746px" width="16" height="16" viewBox="0 0 16 16"><path d="M1.600 10.200l1.700-2.900h9.400l1.700 2.900z" fill="#bcc0c2"/><rect x="1.400" y="10" width="13.400" height="4.500" rx=".6" fill="#3c4043"/><rect x="11.800" y="11.800" width="1.800" height="1" fill="#f0f4f0"/></svg>
<div class="t" style="left:54.5px;top:746px;letter-spacing:-0.33px;">Data 1 (K:)</div>
<div class="a" style="left:0;top:770px;width:207px;height:17px;overflow:hidden">
<svg style="left:8.5px;top:10px" width="6" height="8" viewBox="0 0 6 8"><path d="M1 .7l3.700 3.300L1 7.300" fill="none" stroke="#a0a0a0" stroke-width="1.700"/></svg>
<svg style="left:25px;top:7px" width="16" height="16" viewBox="0 0 16 16"><path d="M1.600 10.200l1.700-2.900h9.400l1.700 2.900z" fill="#bcc0c2"/><rect x="1.400" y="10" width="13.400" height="4.500" rx=".6" fill="#3c4043"/><rect x="11.800" y="11.800" width="1.800" height="1" fill="#f0f4f0"/></svg>
<div class="t" style="left:46.5px;top:6px;letter-spacing:-0.33px;">Data 1 (K:)</div>
</div>
<div class="a" style="left:207px;top:182px;width:17px;height:605px;background:#f0f0f0;"></div>
<div class="a" style="left:208px;top:199px;width:15px;height:400px;background:#cdcdcd;"></div>
<svg style="left:211.5px;top:188px" width="8" height="6" viewBox="0 0 8 6"><path d="M.8 5.200L4 2l3.200 3.200" fill="none" stroke="#404040" stroke-width="1.900"/></svg>
<svg style="left:211.5px;top:775px" width="8" height="6" viewBox="0 0 8 6"><path d="M.8 .8L4 4l3.200-3.200" fill="none" stroke="#404040" stroke-width="1.900"/></svg>
</div>
<div id="filelist">
<div class="a" style="left:499px;top:181px;width:1px;height:27px;background:#e9e9e9;"></div>
<div class="a" style="left:579px;top:181px;width:1px;height:27px;background:#e9e9e9;"></div>
<div class="a" style="left:723px;top:181px;width:1px;height:27px;background:#e9e9e9;"></div>
<div class="a" style="left:842px;top:181px;width:1px;height:27px;background:#e9e9e9;"></div>
<div class="a" style="left:923px;top:181px;width:1px;height:27px;background:#e9e9e9;"></div>
<svg style="left:366px;top:181px" width="8" height="5" viewBox="0 0 8 5"><path d="M.6 4.400L4 1l3.400 3.400" fill="none" stroke="#7a7a7a" stroke-width="1"/></svg>
<div class="a" style="left:239px;top:188px;width:13px;height:13px;background:#fff;border:1px solid #333;"></div>
<div class="t h" style="left:262px;top:187px;letter-spacing:0.06px;">Name</div>
<div class="t h" style="left:506px;top:187px;letter-spacing:-0.16px;">Status</div>
<div class="t h" style="left:586px;top:187px;letter-spacing:0.21px;">Date modified</div>
<div class="t h" style="left:730px;top:187px;letter-spacing:-0.04px;">Type</div>
<div class="t h" style="left:850px;top:187px;letter-spacing:-0.49px;">Size</div>
<div class="a" style="left:242px;top:297px;width:678px;height:22px;background:#d8d8d8;"></div>
<svg style="left:261px;top:214.5px" width="16" height="16" viewBox="0 0 16 16"><path d="M13.500 8.800h1.400v6.900h-1.400z" fill="#f0cb5e"/><path d="M2.500 .7h11.200v14.600H2.500z" fill="url(#fg)" stroke="#e0c873" stroke-width=".8"/></svg>
<div class="t" style="left:281px;top:215.5px;letter-spacing:-0.17px;">Camera Roll</div>
<div class="t m" style="left:586px;top:215.5px;letter-spacing:-0.13px;">1/4/2023 2:14 PM</div>
<div class="t m" style="left:730px;top:215.5px;letter-spacing:0.06px;">File folder</div>
<svg style="left:261px;top:235.5px" width="16" height="16" viewBox="0 0 16 16"><path d="M13.500 8.800h1.400v6.900h-1.400z" fill="#f0cb5e"/><path d="M2.500 .7h11.200v14.600H2.500z" fill="url(#fg)" stroke="#e0c873" stroke-width=".8"/></svg>
<div class="t" style="left:281px;top:236.5px;letter-spacing:-0.01px;">files</div>
<div class="t m" style="left:586px;top:236.5px;letter-spacing:-0.16px;">1/18/2023 2:35 PM</div>
<div class="t m" style="left:730px;top:236.5px;letter-spacing:0.06px;">File folder</div>
<svg style="left:261px;top:256.5px" width="16" height="16" viewBox="0 0 16 16"><path d="M13.500 8.800h1.400v6.900h-1.400z" fill="#f0cb5e"/><path d="M2.500 .7h11.200v14.600H2.500z" fill="url(#fg)" stroke="#e0c873" stroke-width=".8"/></svg>
<div class="t" style="left:281px;top:257.5px;letter-spacing:-0.01px;">rename</div>
<div class="t m" style="left:586px;top:257.5px;letter-spacing:-0.06px;">11/28/2023 12:00 AM</div>
<div class="t m" style="left:730px;top:257.5px;letter-spacing:0.06px;">File folder</div>
<svg style="left:261px;top:277.5px" width="16" height="16" viewBox="0 0 16 16"><path d="M13.500 8.800h1.400v6.900h-1.400z" fill="#f0cb5e"/><path d="M2.500 .7h11.200v14.600H2.500z" fill="url(#fg)" stroke="#e0c873" stroke-width=".8"/></svg>
<div class="t" style="left:281px;top:278.5px;letter-spacing:-0.21px;">Saved Pictures</div>
<div class="t m" style="left:586px;top:278.5px;letter-spacing:-0.13px;">1/9/2023 1:47 PM</div>
<div class="t m" style="left:730px;top:278.5px;letter-spacing:0.06px;">File folder</div>
<svg style="left:261px;top:298.5px" width="16" height="16" viewBox="0 0 16 16"><path d="M13.500 8.800h1.400v6.900h-1.400z" fill="#f0cb5e"/><path d="M2.500 .7h11.200v14.600H2.500z" fill="url(#fg)" stroke="#e0c873" stroke-width=".8"/></svg>
<div class="t" style="left:281px;top:299.5px;letter-spacing:-0.19px;">Screenshots</div>
<div class="t m" style="left:586px;top:299.5px;letter-spacing:-0.16px;">2/9/2024 12:53 PM</div>
<div class="t m" style="left:730px;top:299.5px;letter-spacing:0.06px;">File folder</div>
<svg style="left:260.5px;top:322.5px" width="17" height="11" viewBox="0.5 0 15.5 10.800"><path d="M4.300 10.500a3.600 3.600 0 0 1-.7-7.100A5 5 0 0 1 12.600 3.300 3.700 3.700 0 0 1 13.500 10.500z" fill="#1e8ee6"/><path d="M1.600 9.300C4.500 6.300 8.500 5.200 14.500 6.200a3.700 3.700 0 0 1-1 4.300H4.300a3.600 3.600 0 0 1-2.700-1.200z" fill="#0f66c0"/></svg>
<div class="t" style="left:281px;top:320.5px;letter-spacing:-0.02px;">Where are my files</div>
<div class="t m" style="left:586px;top:320.5px;letter-spacing:-0.13px;">1/4/2023 2:14 PM</div>
<div class="t m" style="left:730px;top:320.5px;letter-spacing:0.11px;">Shortcut</div>
<div class="t m" style="left:842px;top:320.5px;width:74px;text-align:right;letter-spacing:-0.45px">2 KB</div>
<div class="a" style="left:246px;top:301px;width:13px;height:13px;background:#fff;border:1px solid #333;"></div>
<svg style="left:248px;top:304px" width="9" height="8" viewBox="0 0 9 8"><path d="M.8 3.800l2.700 2.800L8.200 .8" fill="none" stroke="#222" stroke-width="1.200"/></svg>
</div>
<div id="statusbar">
<div class="a" style="left:0px;top:788px;width:1110px;height:23px;background:#ffffff;"></div>
<div class="t s" style="left:15px;top:791px;letter-spacing:-0.01px;">6 items</div>
<div class="a" style="left:63px;top:791px;width:1px;height:17px;background:#f6f6f6;"></div>
<div class="t s" style="left:74px;top:791px;letter-spacing:0.02px;">1 item selected</div>
<div class="a" style="left:1061px;top:787px;width:22px;height:23px;background:#cce8ff;border:1px solid #4f8fb5;"></div>
<svg style="left:1065px;top:792px" width="17" height="13" viewBox="0 0 17 13"><path d="M.5 .5h4v4h-4zM.5 4.500h4v4h-4zM.5 8.500h4v4h-4z" fill="#fff" stroke="#9a9498" stroke-width=".8"/><path d="M2 2h1v1H2zM2 6h1v1H2zM2 10h1v1H2z" fill="#3d4a52"/><path d="M6 2h4v1H6zM12 2h4v1h-4zM6 6h4v1H6zM12 6h4v1h-4zM6 10h4v1H6zM12 10h4v1h-4z" fill="#5b727e"/></svg>
<svg style="left:1087px;top:792px" width="14" height="11" viewBox="0 0 14 11"><rect x=".5" y=".5" width="13" height="10" fill="#fff" stroke="#7b868e"/><rect x="2" y="2" width="10" height="7" fill="#cfe0ec"/><path d="M2 5.500c3-1.500 6-.5 10 .5v3H2z" fill="#6d8ea3"/><path d="M2 7c3-1 6 0 10 1v1H2z" fill="#2f4a5a"/></svg>
</div>
<div id="contextmenu">
<div class="a" style="left:109px;top:329px;width:278px;height:411px;background:#eeeeee;border:1px solid #9c9c9c;box-shadow:2px 2px 1px rgba(0,0,0,.42)"></div>
<div class="t g" style="left:144.5px;top:337px;letter-spacing:-0.24px;">Expand</div>
<div class="a" style="left:120px;top:359px;width:256px;height:1px;background:#919191;"></div>
<div class="t" style="left:144.5px;top:366px;letter-spacing:0.15px;">Open in new window</div>
<div class="t" style="left:144.5px;top:388px;letter-spacing:-0.01px;">Open in Terminal Preview</div>
<svg style="left:120px;top:390px" width="16" height="12" viewBox="0 0 16 12"><rect width="16" height="12" fill="#333a3b"/><rect width="16" height="1.500" fill="#8d9091"/><rect x="7.500" y="8" width="8.500" height="4" fill="#62d0ea"/><path d="M2.300 3.500l3 2.500-3 2.500" fill="none" stroke="#fff" stroke-width="1.300"/></svg>
<div class="t" style="left:144.5px;top:410px;letter-spacing:0.0px;">Manage OneDrive backup</div>
<svg style="left:119px;top:412px" width="17" height="11" viewBox="0.5 0 15.5 10.800"><path d="M4.300 10.500a3.600 3.600 0 0 1-.7-7.100A5 5 0 0 1 12.600 3.300 3.700 3.700 0 0 1 13.500 10.500z" fill="#1e8ee6"/><path d="M1.600 9.300C4.500 6.300 8.500 5.200 14.500 6.200a3.700 3.700 0 0 1-1 4.300H4.300a3.600 3.600 0 0 1-2.700-1.200z" fill="#0f66c0"/></svg>
<div class="t" style="left:144.5px;top:432px;letter-spacing:0.03px;">Scan with Microsoft Defender...</div>
<svg style="left:120px;top:432px" width="16" height="16" viewBox="0 0 16 16"><rect width="16" height="16" fill="#1b6fc2"/><path d="M8 .8c2.200 1 4.300 1.300 6.800 1.300v5.400c0 3.300-2.800 6-6.800 7.800-4-1.800-6.800-4.500-6.800-7.800V2.100C3.700 2.100 5.800 1.800 8 .8z" fill="#def4fb"/><path d="M8 .8v14.500M1.200 7.300h13.600" stroke="#1b6fc2" stroke-width="1.200"/></svg>
<svg style="left:109px;top:452px" width="278" height="33" viewBox="0 0 278 33"><rect x="2.300" y="2" width="272.800" height="29" rx="1.500" fill="#fff" stroke="#d9232c" stroke-width="3.600"/></svg>
<div class="t" style="left:144.5px;top:461px;letter-spacing:0.05px;">Unpin from Quick access</div>
<div class="t" style="left:144.5px;top:483px;letter-spacing:-0.25px;">Give access to</div>
<svg style="left:368px;top:484px" width="7" height="13" viewBox="0 0 7 13"><path d="M.5 .5L6.500 6.500 .5 12.500" fill="none" stroke="#3a3a3a" stroke-width="1"/></svg>
<div class="t" style="left:144.5px;top:505px;letter-spacing:-0.14px;">Restore previous versions</div>
<div class="t" style="left:144.5px;top:527px;letter-spacing:0.14px;">Include in library</div>
<svg style="left:368px;top:528px" width="7" height="13" viewBox="0 0 7 13"><path d="M.5 .5L6.500 6.500 .5 12.500" fill="none" stroke="#3a3a3a" stroke-width="1"/></svg>
<div class="t" style="left:144.5px;top:549px;letter-spacing:0.0px;">Pin to Start</div>
<div class="t" style="left:144.5px;top:571px;letter-spacing:-0.2px;">PowerRename</div>
<svg style="left:120px;top:572px" width="16" height="14" viewBox="0 0 16 14"><path d="M8 .8h5M8 12.700h5M10.500 .8v12" fill="none" stroke="#3a96e0" stroke-width="1.100"/><rect x="1" y="3.600" width="13" height="6.300" fill="#1b74c4"/><path d="M10.500 3.600v6.300" stroke="#3f9ae4" stroke-width="1"/></svg>
<div class="a" style="left:120px;top:593px;width:256px;height:1px;background:#919191;"></div>
<div class="t" style="left:144.5px;top:600px;letter-spacing:-0.2px;">PowerRename</div>
<svg style="left:120px;top:601px" width="16" height="14" viewBox="0 0 16 14"><path d="M8 .8h5M8 12.700h5M10.500 .8v12" fill="none" stroke="#3a96e0" stroke-width="1.100"/><rect x="1" y="3.600" width="13" height="6.300" fill="#1b74c4"/><path d="M10.500 3.600v6.300" stroke="#3f9ae4" stroke-width="1"/></svg>
<div class="a" style="left:120px;top:622px;width:256px;height:1px;background:#919191;"></div>
<div class="t" style="left:144.5px;top:629px;letter-spacing:-0.17px;">Send to</div>
<svg style="left:368px;top:630px" width="7" height="13" viewBox="0 0 7 13"><path d="M.5 .5L6.500 6.500 .5 12.500" fill="none" stroke="#3a3a3a" stroke-width="1"/></svg>
<div class="a" style="left:120px;top:651px;width:256px;height:1px;background:#919191;"></div>
<div class="t" style="left:144.5px;top:658px;letter-spacing:-0.06px;">Copy</div>
<div class="a" style="left:120px;top:680px;width:256px;height:1px;background:#919191;"></div>
<div class="t" style="left:144.5px;top:687px;letter-spacing:0.1px;">New</div>
<svg style="left:368px;top:688px" width="7" height="13" viewBox="0 0 7 13"><path d="M.5 .5L6.500 6.500 .5 12.500" fill="none" stroke="#3a3a3a" stroke-width="1"/></svg>
<div class="a" style="left:120px;top:709px;width:256px;height:1px;background:#919191;"></div>
<div class="t" style="left:144.5px;top:716px;letter-spacing:-0.1px;">Properties</div>
</div>
<div id="winborder">
<div class="a" style="left:0px;top:54px;width:1px;height:757px;background:#256a8f;"></div>
<div class="a" style="left:1109px;top:54px;width:1px;height:757px;background:#256a8f;"></div>
<div class="a" style="left:0px;top:809px;width:1110px;height:1px;background:rgba(26,111,176,.35);"></div>
<div class="a" style="left:0px;top:810px;width:1110px;height:1px;background:#1a6fb0;"></div>
</div>
</div>
</body>
</html>
